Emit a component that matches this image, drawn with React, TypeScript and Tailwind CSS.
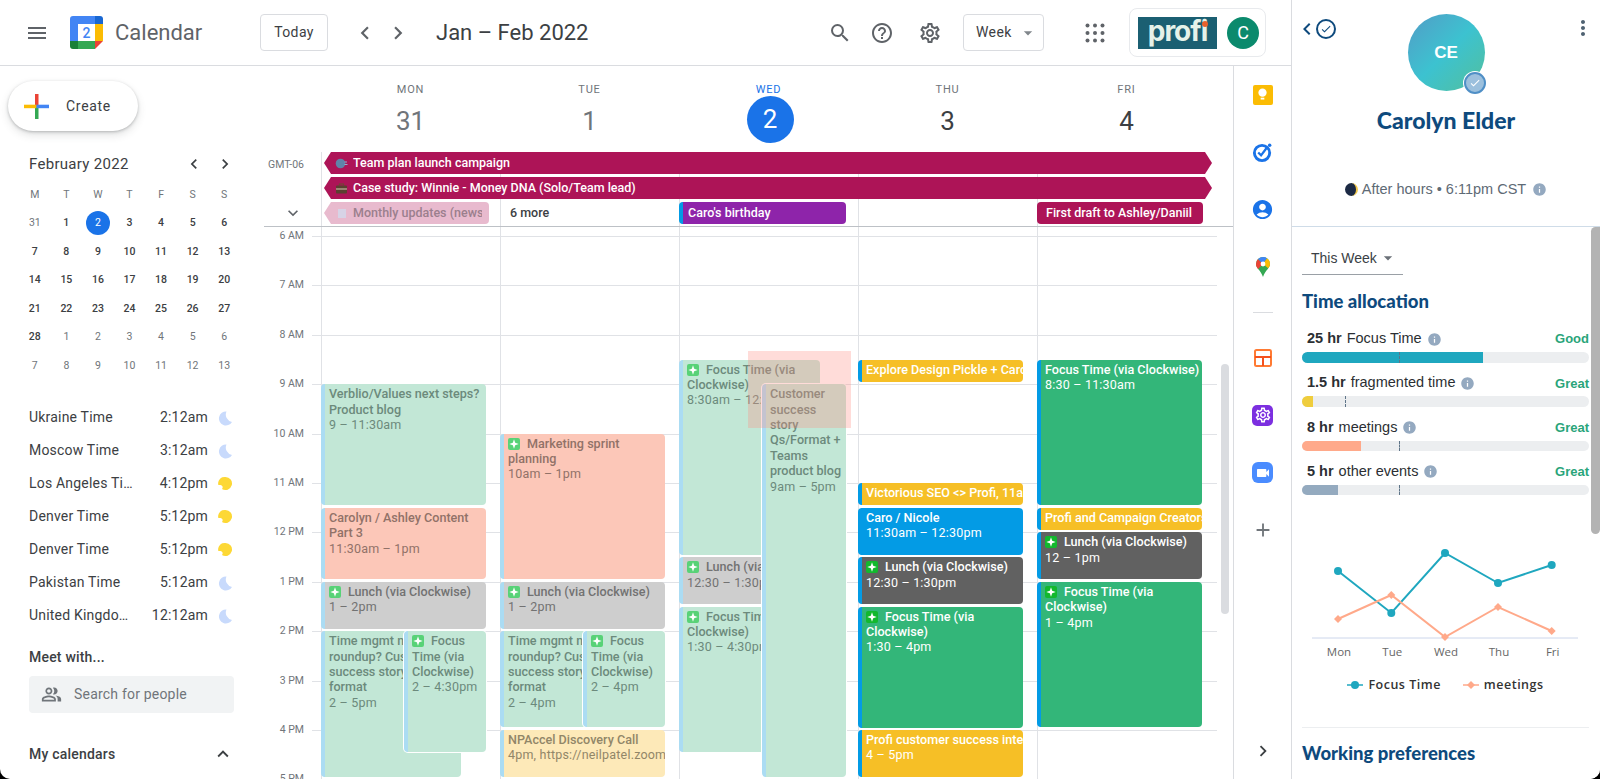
import {
  MdAccountCircle,
  MdArrowDropDown,
  MdChevronLeft,
  MdChevronRight,
  MdExpandLess,
  MdExpandMore,
  MdHelpOutline,
  MdInfo,
  MdMenu,
  MdMoreVert,
  MdOutlinePeopleAlt,
  MdOutlineSettings,
  MdAdd,
  MdSearch,
  MdVideocam,
  MdCheck,
} from 'react-icons/md'

const HOUR_PX = 49.4
const FIRST_HOUR = 6

const KINDS = {
  mint: 'bg-[#c2e7d6] border-[#abdcf3] text-[#6c8a7c]',
  peach: 'bg-[#fcc7b8] border-[#abdcf3] text-[#917268]',
  gray: 'bg-[#cecece] border-[#abdcf3] text-[#727272]',
  cream: 'bg-[#fde9b8] border-[#abdcf3] text-[#918668]',
  amber: 'bg-[#f6bf26] border-[#039be5] text-white',
  blue: 'bg-[#039be5] border-[#039be5] text-white',
  dark: 'bg-[#616161] border-[#039be5] text-white',
  green: 'bg-[#33b679] border-[#039be5] text-white',
}

type CalEvent = {
  start: number
  end: number
  kind: keyof typeof KINDS
  title: string
  time?: string
  left?: number
  width?: number
  spark?: boolean
  oneLine?: boolean
  raised?: boolean
  pre?: boolean
}

const WEEK: CalEvent[][] = [
  [
    { start: 9, end: 11.5, kind: 'mint', title: 'Verblio/Values next steps? Product blog', time: '9 – 11:30am' },
    { start: 11.5, end: 13, kind: 'peach', title: 'Carolyn / Ashley Content Part 3', time: '11:30am – 1pm' },
    { start: 13, end: 14, kind: 'gray', title: 'Lunch (via Clockwise)', time: '1 – 2pm', spark: true },
    { start: 14, end: 17, kind: 'mint', title: 'Time mgmt newsletter\nroundup? Customer\nsuccess story\nformat', time: '2 – 5pm', width: 140, pre: true },
    { start: 14, end: 16.5, kind: 'mint', title: 'Focus Time (via Clockwise)', time: '2 – 4:30pm', left: 83, width: 82, spark: true, raised: true },
  ],
  [
    { start: 10, end: 13, kind: 'peach', title: 'Marketing sprint planning', time: '10am – 1pm', spark: true },
    { start: 13, end: 14, kind: 'gray', title: 'Lunch (via Clockwise)', time: '1 – 2pm', spark: true },
    { start: 14, end: 16, kind: 'mint', title: 'Time mgmt newsletter\nroundup? Customer\nsuccess story\nformat', time: '2 – 4pm', width: 90, pre: true },
    { start: 14, end: 16, kind: 'mint', title: 'Focus Time (via Clockwise)', time: '2 – 4pm', left: 83, width: 82, spark: true, raised: true },
    { start: 16, end: 17, kind: 'cream', title: 'NPAccel Discovery Call', time: '4pm, https://neilpatel.zoom.us/j/8841' },
  ],
  [
    { start: 8.5, end: 12.5, kind: 'mint', title: 'Focus Time (via Clockwise)', time: '8:30am – 12:30pm', width: 141, spark: true },
    { start: 12.5, end: 13.5, kind: 'gray', title: 'Lunch (via Clockwise)', time: '12:30 – 1:30pm', width: 155, spark: true },
    { start: 13.5, end: 16.5, kind: 'mint', title: 'Focus Time (via Clockwise)', time: '1:30 – 4:30pm', width: 141, spark: true },
    { start: 9, end: 17, kind: 'mint', title: 'Customer success story Qs/Format + Teams product blog', time: '9am – 5pm', left: 83, width: 84, raised: true },
  ],
  [
    { start: 8.5, end: 9, kind: 'amber', title: 'Explore Design Pickle + Carolyn', oneLine: true },
    { start: 11, end: 11.5, kind: 'amber', title: 'Victorious SEO <> Profi, 11am', oneLine: true },
    { start: 11.5, end: 12.5, kind: 'blue', title: 'Caro / Nicole', time: '11:30am – 12:30pm' },
    { start: 12.5, end: 13.5, kind: 'dark', title: 'Lunch (via Clockwise)', time: '12:30 – 1:30pm', spark: true },
    { start: 13.5, end: 16, kind: 'green', title: 'Focus Time (via Clockwise)', time: '1:30 – 4pm', spark: true },
    { start: 16, end: 17, kind: 'amber', title: 'Profi customer success interview', time: '4 – 5pm', oneLine: true },
  ],
  [
    { start: 8.5, end: 11.5, kind: 'green', title: 'Focus Time (via Clockwise)', time: '8:30 – 11:30am' },
    { start: 11.5, end: 12, kind: 'amber', title: 'Profi and Campaign Creators', oneLine: true },
    { start: 12, end: 13, kind: 'dark', title: 'Lunch (via Clockwise)', time: '12 – 1pm', spark: true },
    { start: 13, end: 16, kind: 'green', title: 'Focus Time (via Clockwise)', time: '1 – 4pm', spark: true },
  ],
]

const DAYS = [
  { name: 'MON', num: '31', tone: 'past' },
  { name: 'TUE', num: '1', tone: 'past' },
  { name: 'WED', num: '2', tone: 'today' },
  { name: 'THU', num: '3', tone: 'next' },
  { name: 'FRI', num: '4', tone: 'next' },
]

const HOURS = ['6 AM', '7 AM', '8 AM', '9 AM', '10 AM', '11 AM', '12 PM', '1 PM', '2 PM', '3 PM', '4 PM', '5 PM']

const MINI_ROWS = [
  ['31', '1', '2', '3', '4', '5', '6'],
  ['7', '8', '9', '10', '11', '12', '13'],
  ['14', '15', '16', '17', '18', '19', '20'],
  ['21', '22', '23', '24', '25', '26', '27'],
  ['28', '1', '2', '3', '4', '5', '6'],
  ['7', '8', '9', '10', '11', '12', '13'],
]

const CLOCKS = [
  { name: 'Ukraine Time', time: '2:12am', day: false },
  { name: 'Moscow Time', time: '3:12am', day: false },
  { name: 'Los Angeles Time', time: '4:12pm', day: true },
  { name: 'Denver Time', time: '5:12pm', day: true },
  { name: 'Denver Time', time: '5:12pm', day: true },
  { name: 'Pakistan Time', time: '5:12am', day: false },
  { name: 'United Kingdom Time', time: '12:12am', day: false },
]

const ALLOCATION = [
  { hours: '25 hr', label: 'Focus Time', status: 'Good', fill: 'bg-[#1fa7bf] w-[181px]', tick: 'left-[97px]' },
  { hours: '1.5 hr', label: 'fragmented time', status: 'Great', fill: 'bg-[#efcd3d] w-[11px]', tick: 'left-[43px]' },
  { hours: '8 hr', label: 'meetings', status: 'Great', fill: 'bg-[#ffa98a] w-[59px]', tick: 'left-[97px]' },
  { hours: '5 hr', label: 'other events', status: 'Great', fill: 'bg-[#94aabf] w-[36px]', tick: 'left-[97px]' },
]

const FOCUS_POINTS = [[36, 64], [89.3, 106], [143, 46], [196, 76], [249.7, 58]]
const MEETING_POINTS = [[36, 112], [89.3, 88], [143, 130], [196, 100], [249.7, 124]]
const CHART_DAYS = ['Mon', 'Tue', 'Wed', 'Thu', 'Fri']

function Spark({ bright }: { bright: boolean }) {
  return (
    <svg viewBox="0 0 12 12" className="mr-[7px] inline-block h-3 w-3 align-[-2px]">
      <rect width="12" height="12" rx="2" fill={bright ? '#12b82e' : '#58d277'} />
      <path d="M6 1.300 7.200 4.800 10.700 6 7.200 7.200 6 10.700 4.800 7.200 1.300 6 4.800 4.800z" fill="#fff" />
    </svg>
  )
}

function Moon() {
  return (
    <svg viewBox="0 0 16 16" className="h-4 w-4">
      <path d="M9.500 1.500A7 7 0 1 0 15 12 7.500 7.500 0 0 1 9.500 1.500z" fill="#c8dafc" />
    </svg>
  )
}

function Sun() {
  return (
    <svg viewBox="0 0 16 16" className="h-[15px] w-4">
      <path d="M8.500 1a7 7 0 1 1-3.800 12.900c.9-.9 1-1.900.5-2.900-.6-1-2-1.500-4.300-1.300A7 7 0 0 1 8.500 1z" fill="#fdd835" />
    </svg>
  )
}

function CalendarLogo() {
  return (
    <svg viewBox="0 0 33 33" className="h-[33px] w-[33px]">
      <path d="M3 0h22v8H8v17H0V3a3 3 0 0 1 3-3z" fill="#4285f4" />
      <path d="M25 0h5a3 3 0 0 1 3 3v5h-8z" fill="#1967d2" />
      <rect x="25" y="8" width="8" height="17" fill="#fbbc04" />
      <rect x="8" y="25" width="17" height="8" fill="#34a853" />
      <path d="M0 25h8v8H3a3 3 0 0 1-3-3z" fill="#188038" />
      <path d="M25 25h8l-8 8z" fill="#ea4335" />
      <rect x="8" y="8" width="17" height="17" fill="#fff" />
      <text x="16.500" y="21.500" textAnchor="middle" fontSize="14" fontWeight="500" fill="#4285f4">2</text>
    </svg>
  )
}

function AppsDots() {
  const spots = [2.5, 10, 17.5]
  return (
    <svg viewBox="0 0 20 20" className="ml-[41px] mr-[3px] h-5 w-5">
      {spots.flatMap((y) => spots.map((x) => <circle key={`${x}-${y}`} cx={x} cy={y} r="2" fill="#5f6368" />))}
    </svg>
  )
}

function EventCard({ ev }: { ev: CalEvent }) {
  const top = 9 + (ev.start - FIRST_HOUR) * HOUR_PX
  const height = (ev.end - ev.start) * HOUR_PX - 2.5
  const bright = ev.kind === 'dark' || ev.kind === 'green'
  return (
    <div
      className={`absolute overflow-hidden rounded-[4px] border-l-4 pl-1 pt-[2px] leading-[15.4px] ${KINDS[ev.kind]} ${ev.raised ? 'z-10 ring-1 ring-white' : ''} ${ev.oneLine ? 'whitespace-nowrap' : ''}`}
      style={{ top, height, left: (ev.left ?? 0) - 1, width: ev.width ?? 165 }}
    >
      <div className={`text-[12.6px] font-medium ${ev.pre ? 'whitespace-pre' : ''}`}>
        {ev.spark && <Spark bright={bright} />}
        {ev.title}
      </div>
      {ev.time && <div className="whitespace-nowrap text-[12.5px] tracking-[0.2px]">{ev.time}</div>}
    </div>
  )
}

function TopBar() {
  return (
    <header className="flex h-[66px] items-center border-b border-[#dadce0] pr-[25px] text-[#5f6368]">
      <MdMenu size={24} className="ml-[25px]" />
      <div className="ml-[21px]">
        <CalendarLogo />
      </div>
      <span className="ml-[12px] w-[145px] text-[22px]">Calendar</span>
      <button className="h-[37px] w-[68px] rounded-[4px] border border-[#dadce0] text-[14px] tracking-[0.4px] text-[#3c4043]">Today</button>
      <MdChevronLeft size={26} className="ml-[24px]" />
      <MdChevronRight size={26} className="ml-[7px]" />
      <span className="ml-[25px] text-[22px] text-[#3c4043]">Jan – Feb 2022</span>
      <MdSearch size={24} className="ml-auto" />
      <MdHelpOutline size={24} className="ml-[18px]" />
      <MdOutlineSettings size={24} className="ml-[24px]" />
      <div className="ml-[21px] flex h-[37px] w-[81px] items-center justify-between rounded-[4px] border border-[#dadce0] pl-[12px] pr-[5px]">
        <span className="text-[14px] tracking-[0.4px] text-[#3c4043]">Week</span>
        <MdArrowDropDown size={20} className="text-[#80868b]" />
      </div>
      <AppsDots />
      <div className="ml-[21px] flex h-[49px] w-[137px] items-center gap-[10px] rounded-[8px] border border-[#e8eaed] pl-[8px]">
        <div className="relative flex h-[32px] w-[79px] items-center justify-center bg-[#1b5f72] pb-[3px] [font-family:Inter,sans-serif] text-[28px] font-bold leading-none tracking-[-1px] text-[#e6f2e9]">
          profi
          <span className="absolute right-[9px] top-[4px] h-[6px] w-[6px] rounded-full bg-[#e8602c]" />
        </div>
        <div className="flex h-[32px] w-[32px] items-center justify-center rounded-full bg-[#0b8a6d] text-[18px] text-white">C</div>
      </div>
    </header>
  )
}

function Sidebar() {
  return (
    <aside className="w-[264px] shrink-0">
      <button className="ml-[8px] mt-[15px] flex h-[50px] w-[130px] items-center rounded-full bg-white shadow-[0_1px_3px_rgba(60,64,67,0.3),0_4px_8px_rgba(60,64,67,0.15)]">
        <svg viewBox="0 0 25 25" className="ml-[16px] h-[25px] w-[25px]">
          <rect x="11" y="0" width="3.500" height="12.500" fill="#ea4335" />
          <rect x="11" y="12.500" width="3.500" height="12.500" fill="#34a853" />
          <rect x="0" y="10.700" width="12.500" height="3.500" fill="#fbbc04" />
          <rect x="12.500" y="10.700" width="12.500" height="3.500" fill="#4285f4" />
        </svg>
        <span className="ml-[17px] text-[14px] tracking-[0.7px] text-[#3c4043]">Create</span>
      </button>

      <div className="ml-[29px] mr-[29px] mt-[23px] flex h-[20px] items-center text-[#3c4043]">
        <span className="flex-1 text-[15px] tracking-[0.3px]">February 2022</span>
        <MdChevronLeft size={20} className="mr-[11px]" />
        <MdChevronRight size={20} />
      </div>

      <div className="ml-[19px] mt-[7px] grid w-[221px] grid-cols-7 text-center text-[10.5px]">
        {['M', 'T', 'W', 'T', 'F', 'S', 'S'].map((d, i) => (
          <span key={i} className="flex h-[28px] items-center justify-center text-[#70757a]">{d}</span>
        ))}
        {MINI_ROWS.flatMap((row, r) =>
          row.map((d, c) => {
            const today = r === 0 && c === 2
            const out = (r === 0 && c === 0) || r === 5 || (r === 4 && c > 0)
            return (
              <span key={`${r}-${c}`} className="flex h-[28.5px] items-center justify-center">
                {today ? (
                  <span className="flex h-6 w-6 items-center justify-center rounded-full bg-[#1a73e8] text-white">{d}</span>
                ) : (
                  <span className={out ? 'text-[#70757a]' : 'font-medium text-[#3c4043]'}>{d}</span>
                )}
              </span>
            )
          }),
        )}
      </div>

      <div className="ml-[29px] mt-[21px] w-[204px] text-[14px] tracking-[0.2px] text-[#3c4043]">
        {CLOCKS.map((c, i) => (
          <div key={i} className="flex h-[33px] items-center">
            <span className="w-[108px] truncate">{c.name}</span>
            <span className="ml-auto">{c.time}</span>
            <span className="ml-[9px]">{c.day ? <Sun /> : <Moon />}</span>
          </div>
        ))}
      </div>

      <div className="ml-[29px] mt-[15px] text-[14px] font-medium leading-[20px] tracking-[0.2px] text-[#3c4043]">Meet with...</div>
      <div className="ml-[29px] mt-[9px] flex h-[37px] w-[205px] items-center rounded-[4px] bg-[#f1f3f4] pl-[12px] text-[14px] tracking-[0.2px] text-[#70757a]">
        <MdOutlinePeopleAlt size={21} />
        <span className="ml-[12px]">Search for people</span>
      </div>
      <div className="ml-[29px] mt-[30px] flex w-[205px] items-center justify-between text-[14px] font-medium leading-[20px] tracking-[0.2px] text-[#3c4043]">
        My calendars
        <MdExpandLess size={22} />
      </div>
    </aside>
  )
}

function Arrow({ className, icon, title }: { className: string; icon: React.ReactNode; title: string }) {
  return (
    <div className={`flex h-[22px] items-center pl-[11px] text-[12.5px] font-medium [clip-path:polygon(7px_0,calc(100%-7px)_0,100%_50%,calc(100%-7px)_100%,7px_100%,0_50%)] ${className}`}>
      <span className="mr-[5px] flex w-[13px] justify-center">{icon}</span>
      <span className="overflow-hidden whitespace-nowrap">{title}</span>
    </div>
  )
}

function SpeakerGlyph() {
  return (
    <svg viewBox="0 0 13 11" className="h-[11px] w-[13px]">
      <circle cx="5.500" cy="5.500" r="4.800" fill="#5f83a8" />
      <path d="M9.500 4h2.500M9.500 6.500h3" stroke="#8fb0cf" strokeWidth="1.200" />
    </svg>
  )
}

function BriefcaseGlyph() {
  return (
    <svg viewBox="0 0 13 11" className="h-[11px] w-[13px]">
      <path d="M4.500 2.500V1h4v1.500" fill="none" stroke="#6b4a32" strokeWidth="1.200" />
      <rect x="1" y="2.500" width="11" height="8" rx="1" fill="#5b4030" />
      <rect x="1" y="5.500" width="11" height="1" fill="#d9c7b5" />
    </svg>
  )
}

function CalendarGrid() {
  return (
    <main className="relative min-w-0 flex-1">
      <div className="ml-[57px] grid h-[86px] w-[895px] grid-cols-5 text-center">
        {DAYS.map((d) => (
          <div key={d.name} className="flex flex-col items-center">
            <span className={`mt-[17px] text-[11px] leading-[14px] tracking-[0.8px] ${d.tone === 'today' ? 'text-[#1a73e8]' : 'text-[#70757a]'}`}>{d.name}</span>
            {d.tone === 'today' ? (
              <span className="-mt-[1px] ml-[3px] flex h-[47px] w-[47px] items-center justify-center rounded-full bg-[#1a73e8] text-[26px] text-white">{d.num}</span>
            ) : (
              <span className={`mt-[8px] text-[26px] leading-[33px] ${d.tone === 'past' ? 'text-[#70757a]' : 'text-[#3c4043]'}`}>{d.num}</span>
            )}
          </div>
        ))}
      </div>

      <div className="relative h-[75px] border-b border-[#bdc1c6]">
        <span className="absolute left-0 top-[5px] w-[40px] text-right text-[10.5px] text-[#70757a]">GMT-06</span>
        <MdExpandMore size={20} className="absolute left-[19px] top-[51px] text-[#5f6368]" />
        <div className="ml-[57px] grid h-full w-[895px] grid-cols-5">
          {DAYS.map((d) => (
            <div key={d.name} className="border-l border-[#e0e2e6]" />
          ))}
        </div>
        <div className="absolute left-[60px] top-0 w-[888px]">
          <Arrow className="bg-[#ad1457] text-white" title="Team plan launch campaign" icon={<SpeakerGlyph />} />
          <div className="mt-[3px]">
            <Arrow className="bg-[#ad1457] text-white" title="Case study: Winnie - Money DNA (Solo/Team lead)" icon={<BriefcaseGlyph />} />
          </div>
        </div>
        <div className="absolute left-[57px] top-[50px] grid w-[895px] grid-cols-5 text-[12.5px] font-medium">
          <div className="ml-[3px] mr-[11px]">
            <div className="flex h-[22px] items-center rounded-r-[4px] bg-[#e8bace] pl-[11px] pr-[7px] text-[#9b7f8d] [clip-path:polygon(7px_0,100%_0,100%_100%,7px_100%,0_50%)]">
              <span className="mr-[5px] flex w-[13px] shrink-0 justify-center">
                <span className="block h-[9px] w-[8px] bg-[#d7d3e6]" />
              </span>
              <span className="overflow-hidden whitespace-nowrap">Monthly updates (newsletter)</span>
            </div>
          </div>
          <div className="flex h-[22px] items-center pl-[10px] text-[#3c4043]">6 more</div>
          <div className="mr-[12px] flex h-[22px] items-center rounded-[4px] border-l-4 border-[#039be5] bg-[#8e24aa] pl-[5px] text-white">Caro's birthday</div>
          <div />
          <div className="mr-[13px] flex h-[22px] items-center rounded-[4px] bg-[#ad1457] pl-[9px] text-white">First draft to Ashley/Daniil</div>
        </div>
      </div>

      <div className="relative h-[552px] overflow-hidden pt-[9px]">
        {HOURS.map((h) => (
          <div key={h} className="flex h-[49.4px] w-[953px]">
            <span className="-mt-[7px] w-[40px] text-right text-[10.5px] leading-[14px] text-[#70757a]">{h}</span>
            <span className="ml-2 h-0 flex-1 border-t border-[#e0e2e6]" />
          </div>
        ))}
        <div className="absolute bottom-0 left-[57px] top-0 grid w-[895px] grid-cols-5">
          {WEEK.map((events, i) => (
            <div key={i} className="relative border-l border-[#e0e2e6]">
              {events.map((ev, j) => (
                <EventCard key={j} ev={ev} />
              ))}
            </div>
          ))}
        </div>
        <div className="absolute left-[484px] top-[124px] z-20 h-[77px] w-[103px] bg-[rgba(255,140,130,0.3)]" />
        <div className="absolute left-[957px] top-[137px] h-[250px] w-2 rounded-full bg-[#dadce0]" />
      </div>
    </main>
  )
}

function SideRail() {
  const slot = 'flex h-[57.5px] items-center justify-center'
  return (
    <nav className="flex w-[58px] shrink-0 flex-col items-center border-l border-[#dadce0]">
      <div className={slot}>
        <span className="flex h-5 w-5 items-center justify-center rounded-[2px] bg-[#fbbc04]">
          <svg viewBox="0 0 12 14" className="h-[13px] w-[11px]">
            <circle cx="6" cy="5" r="4.500" fill="#fff" />
            <rect x="4" y="10.500" width="4" height="2" fill="#fff" />
          </svg>
        </span>
      </div>
      <div className={slot}>
        <svg viewBox="0 0 22 22" className="h-[21px] w-[21px]">
          <circle cx="10.500" cy="11.500" r="8" fill="none" stroke="#1a73e8" strokeWidth="3" />
          <path d="M6.500 11l3 3 6-8" fill="none" stroke="#1a73e8" strokeWidth="2.400" />
          <circle cx="18.500" cy="3.500" r="1.800" fill="#1a73e8" />
        </svg>
      </div>
      <div className={slot}>
        <MdAccountCircle size={23} className="text-[#1a73e8]" />
      </div>
      <div className={slot}>
        <svg viewBox="0 0 14 20" className="h-[20px] w-[14px]">
          <path d="M7 0a7 7 0 0 1 7 7c0 4-4.500 6-7 13C4.500 13 0 11 0 7a7 7 0 0 1 7-7z" fill="#34a853" />
          <path d="M0 7a7 7 0 0 1 2-4.900L7 7l-5 5C.8 10.500 0 9 0 7z" fill="#ea4335" />
          <path d="M2 2.100A7 7 0 0 1 11 1.300L7 7z" fill="#4285f4" />
          <path d="M11 1.300A7 7 0 0 1 14 7c0 1.500-.7 3-1.800 4.300L7 7z" fill="#fbbc04" />
          <circle cx="7" cy="7" r="2.400" fill="#fff" />
        </svg>
      </div>
      <div className="mb-[16px] mt-[16px] h-px w-5 bg-[#dadce0]" />
      <div className={slot}>
        <svg viewBox="0 0 18 18" className="h-[18px] w-[18px]">
          <rect x="1" y="1" width="16" height="16" rx="1.500" fill="none" stroke="#ff7a33" strokeWidth="2" />
          <path d="M1 8h16M9 8v9" stroke="#f4511e" strokeWidth="2" />
        </svg>
      </div>
      <div className={slot}>
        <span className="flex h-[21px] w-[21px] items-center justify-center rounded-[5px] bg-[#7c2fe0]">
          <MdOutlineSettings size={18} className="text-white" />
        </span>
      </div>
      <div className={slot}>
        <span className="flex h-[21px] w-[21px] items-center justify-center rounded-[6px] bg-[#4a8cff]">
          <MdVideocam size={16} className="text-white" />
        </span>
      </div>
      <div className={slot}>
        <MdAdd size={22} className="text-[#70757a]" />
      </div>
      <MdChevronRight size={22} className="mt-[181px] text-[#3c4043]" />
    </nav>
  )
}

function AllocationRow({ row }: { row: (typeof ALLOCATION)[number] }) {
  return (
    <div className="h-[44.3px]">
      <div className="flex h-[18px] items-center pl-[5px] text-[14.5px] text-[#2b2f33]">
        <b>{row.hours}</b>
        <span className="ml-[5px]">{row.label}</span>
        <MdInfo size={15} className="ml-[5px] text-[#94a9c0]" />
        <b className="ml-auto text-[13px] text-[#2aa57a]">{row.status}</b>
      </div>
      <div className="relative mt-[4px] h-[10.5px] overflow-hidden rounded-full bg-[#eceef0]">
        <div className={`h-full ${row.fill}`} />
        <div className={`absolute top-0 h-full border-l border-dashed border-[#5e7488] ${row.tick}`} />
      </div>
    </div>
  )
}

function TrendChart() {
  const line = (pts: number[][]) => pts.map((p) => p.join(',')).join(' ')
  return (
    <svg viewBox="0 0 287 158" className="h-[158px] w-[287px]">
      <line x1="10" x2="276" y1="131" y2="131" stroke="#ccd6eb" />
      <polyline points={line(FOCUS_POINTS)} fill="none" stroke="#1fa7bf" strokeWidth="2" />
      <polyline points={line(MEETING_POINTS)} fill="none" stroke="#ffa98a" strokeWidth="2" />
      {FOCUS_POINTS.map(([x, y]) => (
        <circle key={x} cx={x} cy={y} r="4" fill="#1fa7bf" />
      ))}
      {MEETING_POINTS.map(([x, y]) => (
        <path key={x} d={`M${x} ${y - 4}l4 4-4 4-4-4z`} fill="#ffa98a" />
      ))}
      {CHART_DAYS.map((d, i) => (
        <text key={d} x={FOCUS_POINTS[i][0] + 1} y="149" textAnchor="middle" fontSize="11.500" fill="#666" fontFamily="'Open Sans', sans-serif">
          {d}
        </text>
      ))}
    </svg>
  )
}

function ClockwisePanel() {
  const heading = '[font-family:Lato,sans-serif] font-black text-[#0e4a7d]'
  return (
    <section className="flex w-[309px] shrink-0 flex-col border-l border-[#dadce0] bg-white [font-family:'Liberation_Sans',sans-serif]">
      <div className="h-[227px] border-b border-[#cfdce8]">
        <div className="grid grid-cols-[1fr_77px_1fr] pt-[14px]">
          <div className="flex items-center self-start pl-[3px] pt-[3px] text-[#0e4a7d]">
            <MdChevronLeft size={24} className="mr-[-3px]" />
            <span className="flex h-5 w-5 items-center justify-center rounded-full border-2 border-[#0e4a7d]">
              <MdCheck size={12} />
            </span>
          </div>
          <div className="relative flex h-[77px] w-[77px] items-center justify-center rounded-full bg-gradient-to-br from-[#4f9cc6] via-[#3cc2d0] to-[#52bf9c] text-[17px] font-bold text-white">
            CE
            <span className="absolute bottom-[-3px] right-[-1px] flex h-[22px] w-[22px] items-center justify-center rounded-full border-2 border-[#4f8fc6] bg-[#9cc0dd] ring-1 ring-white">
              <MdCheck size={12} className="text-white" />
            </span>
          </div>
          <div className="flex justify-end self-start pr-[5px] pt-[2px]">
            <MdMoreVert size={24} className="text-[#4f6272]" />
          </div>
        </div>
        <div className={`mt-[14px] text-center text-[23px] leading-[30px] ${heading}`}>Carolyn Elder</div>
        <div className="mt-[44px] flex items-center justify-center text-[14.500px] leading-[20px] text-[#5e6a75]">
          <span className="mr-[4px] h-[13px] w-[13px] rounded-full border-r-2 border-[#f2c94c] bg-[#1c2a44]" />
          After hours • 6:11pm CST
          <MdInfo size={15} className="ml-[6px] text-[#94a9c0]" />
        </div>
      </div>

      <div className="flex min-h-0 flex-1">
        <div className="w-[297px] pl-[10px]">
          <div className="mt-[21px] flex h-[27px] w-[101px] items-start border-b border-[#9aa0a6] pl-[9px] text-[14px] leading-[20px] text-[#3a3f45]">
            This Week
            <MdArrowDropDown size={20} className="ml-[1px] text-[#6b7178]" />
          </div>
          <div className={`mt-[16px] text-[18.500px] leading-[20px] ${heading}`}>Time allocation</div>
          <div className="mt-[19px]">
            {ALLOCATION.map((row) => (
              <AllocationRow key={row.label} row={row} />
            ))}
          </div>
          <TrendChart />
          <div className="mt-[10px] flex h-[20px] items-center justify-center gap-[22px] [font-family:'Open_Sans',sans-serif] text-[12.500px] font-semibold tracking-[0.5px] text-[#333]">
            <span className="flex items-center gap-[5px]">
              <svg viewBox="0 0 16 8" className="h-2 w-4">
                <line x1="0" x2="16" y1="4" y2="4" stroke="#1fa7bf" strokeWidth="1.500" />
                <circle cx="8" cy="4" r="4" fill="#1fa7bf" />
              </svg>
              Focus Time
            </span>
            <span className="flex items-center gap-[5px]">
              <svg viewBox="0 0 16 8" className="h-2 w-4">
                <line x1="0" x2="16" y1="4" y2="4" stroke="#ffa98a" strokeWidth="1.500" />
                <path d="M8 0l4 4-4 4-4-4z" fill="#ffa98a" />
              </svg>
              meetings
            </span>
          </div>
          <div className="mt-[32px] border-t border-[#eceef0]" />
          <div className={`mt-[15px] text-[18.500px] leading-[20px] ${heading}`}>Working preferences</div>
        </div>
        <div className="ml-[2px] h-[307px] w-[9px] rounded-b-[5px] rounded-tl-[5px] bg-[#b3b3b3]" />
      </div>
    </section>
  )
}

export default function App() {
  return (
    <div className="h-[779px] w-[1600px] overflow-hidden bg-black [font-family:Roboto,sans-serif]">
      <div className="flex h-full w-full overflow-hidden rounded-b-[10px] bg-white">
        <div className="flex w-[1291px] shrink-0 flex-col">
          <TopBar />
          <div className="flex min-h-0 flex-1">
            <Sidebar />
            <CalendarGrid />
            <SideRail />
          </div>
        </div>
        <ClockwisePanel />
      </div>
    </div>
  )
}
